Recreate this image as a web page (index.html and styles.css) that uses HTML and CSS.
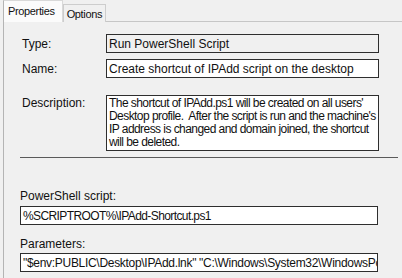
FILE: index.html
```html
<!DOCTYPE html>
<html lang="en">
  <head>
    <meta charset="UTF-8" />
    <title>Properties</title>
    <link rel="stylesheet" href="styles.css">
  </head>
  <body>
    <div class="tabs">
      <div class="tab active">Properties</div>
      <div class="tab">Options</div>
      <div class="tab-fill"></div>
    </div>
    <div class="panel">
      <div class="row">
        <span class="label">Type:</span>
        <div class="field readonly">Run PowerShell Script</div>
      </div>
      <div class="row">
        <span class="label">Name:</span>
        <div class="field">Create shortcut of IPAdd script on the desktop</div>
      </div>
      <div class="row top">
        <span class="label">Description:</span>
        <div class="field multi">
          <div>The shortcut of IPAdd.ps1 will be created on all users'</div>
          <div>Desktop profile.&nbsp; After the script is run and the machine's</div>
          <div>IP address is changed and domain joined, the shortcut</div>
          <div>will be deleted.</div>
        </div>
      </div>

      <hr class="sep" />

      <!-- Script section -->
      <div class="block">
        <div class="block-label">PowerShell script:</div>
        <div class="field path">%SCRIPTROOT%\IPAdd-Shortcut.ps1</div>
      </div>
      <div class="block">
        <div class="block-label">Parameters:</div>
        <div class="field params">"$env:PUBLIC\Desktop\IPAdd.lnk" "C:\Windows\System32\WindowsPowerShell\v1.0\powershell.exe"</div>
      </div>
    </div>
  </body>
</html>
```

FILE: styles.css
```css
body {
  font-family: "Liberation Sans", Arial, sans-serif;
  font-size: 12px;
  background-color: #f0f0f0;
  color: #111;
  margin: 0;
  padding: 0;
  height: 278px;
  overflow: hidden;
}
.tabs {
  display: flex;
  align-items: flex-end;
  height: 22px;
  padding-left: 3px;
}
.tab {
  height: 17px;
  line-height: 18px;
  padding: 0 3px 0 3px;
  border: 1px solid #cdcdcd;
  border-bottom: none;
  background: #f0f0f0;
  font-size: 11px;
  letter-spacing: -0.35px;
}
.tab.active {
  height: 21px;
  line-height: 21px;
  padding: 0 7px 0 4px;
  border-color: #d9d9d9;
  border-left-color: #b4b4b4;
  background: #fbfbfb;
}
.tab-fill {
  flex: 1;
  border-bottom: 1px solid #c6c6c6;
}
.panel {
  margin-left: 3px;
  border-left: 1px solid #b4b4b4;
  height: 256px;
  padding-top: 12px;
}
.row {
  display: flex;
  align-items: center;
  margin: 0 0 6px 18px;
}
.row.top {
  align-items: flex-start;
  margin-top: 17px;
}
.row.top .label {
  padding-top: 1px;
}
.label {
  width: 84px;
  flex: none;
}
.field {
  width: 268px;
  height: 16px;
  line-height: 16px;
  padding: 1px 1px 0 2px;
  border: 1px solid #2e2e2e;
  background: #fff;
  white-space: nowrap;
  overflow: hidden;
}
.readonly {
  background: #f0f0f0;
}
.multi {
  height: 52px;
  line-height: 13px;
  padding: 1px 1px 1px 2px;
  letter-spacing: -0.56px;
}
.sep {
  margin: 6px 0 0 16px;
  width: 378px;
  border: none;
  border-top: 1px solid #5a5a5a;
}
.block {
  margin-left: 16px;
}
.block-label {
  margin-top: 31px;
  height: 14px;
  line-height: 14px;
  margin-bottom: 3px;
}
.block .field {
  width: 353px;
}
.block .path {
  letter-spacing: -0.6px;
}
.block .params {
  letter-spacing: -0.3px;
}
.block + .block .block-label {
  margin-top: 12px;
  margin-bottom: 2px;
}
```
